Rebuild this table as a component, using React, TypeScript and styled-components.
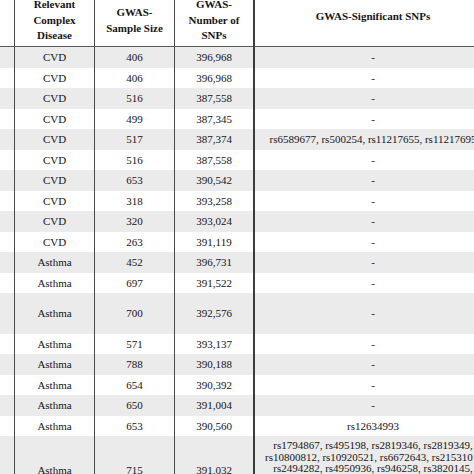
import React from "react";
import styled, { createGlobalStyle } from "styled-components";

interface GwasRow {
  disease: string;
  size: string;
  snps: string;
  significant: string[];
  height?: number;
}

const rows: GwasRow[] = [
  { disease: "CVD", size: "406", snps: "396,968", significant: ["-"] },
  { disease: "CVD", size: "406", snps: "396,968", significant: ["-"] },
  { disease: "CVD", size: "516", snps: "387,558", significant: ["-"] },
  { disease: "CVD", size: "499", snps: "387,345", significant: ["-"] },
  {
    disease: "CVD",
    size: "517",
    snps: "387,374",
    significant: ["rs6589677, rs500254, rs11217655, rs11217695"],
  },
  { disease: "CVD", size: "516", snps: "387,558", significant: ["-"] },
  { disease: "CVD", size: "653", snps: "390,542", significant: ["-"] },
  { disease: "CVD", size: "318", snps: "393,258", significant: ["-"] },
  { disease: "CVD", size: "320", snps: "393,024", significant: ["-"] },
  { disease: "CVD", size: "263", snps: "391,119", significant: ["-"] },
  { disease: "Asthma", size: "452", snps: "396,731", significant: ["-"] },
  { disease: "Asthma", size: "697", snps: "391,522", significant: ["-"] },
  { disease: "Asthma", size: "700", snps: "392,576", significant: ["-"], height: 40.5 },
  { disease: "Asthma", size: "571", snps: "393,137", significant: ["-"] },
  { disease: "Asthma", size: "788", snps: "390,188", significant: ["-"] },
  { disease: "Asthma", size: "654", snps: "390,392", significant: ["-"] },
  { disease: "Asthma", size: "650", snps: "391,004", significant: ["-"] },
  { disease: "Asthma", size: "653", snps: "390,560", significant: ["rs12634993"] },
  {
    disease: "Asthma",
    size: "715",
    snps: "391,032",
    significant: [
      "rs1794867, rs495198, rs2819346, rs2819349,",
      "rs10800812, rs10920521, rs6672643, rs2153101,",
      "rs2494282, rs4950936, rs946258, rs3820145,",
    ],
    height: 68,
  },
];

// first column is only a sliver: the table is cropped on the left
const colWidths = [14, 80, 80, 79, 238];

export default function App() {
  return (
    <>
      <GlobalStyle />
      <Page>
        <Table>
          <colgroup>
            {colWidths.map((w, i) => (
              <Col key={i} $w={w} />
            ))}
          </colgroup>
          <thead>
            <tr>
              <HeadCell $edge />
              <HeadCell>
                Relevant
                <br />
                Complex
                <br />
                Disease
              </HeadCell>
              <HeadCell>
                GWAS-
                <br />
                Sample Size
              </HeadCell>
              <HeadCell>
                GWAS-
                <br />
                Number of
                <br />
                SNPs
              </HeadCell>
              <HeadCell $wide>GWAS-Significant SNPs</HeadCell>
            </tr>
          </thead>
          <tbody>
            {rows.map((r, i) => {
              const multi = r.significant.length > 1;
              return (
                <Row key={i} $shaded={i % 2 === 0} $h={r.height ?? 20.5}>
                  <Cell $edge />
                  <Cell>{r.disease}</Cell>
                  <Cell>{r.size}</Cell>
                  <Cell>{r.snps}</Cell>
                  <SnpCell $wide $top={multi}>
                    {r.significant.map((line, j) => (
                      <React.Fragment key={j}>
                        {j > 0 && <br />}
                        {line}
                      </React.Fragment>
                    ))}
                  </SnpCell>
                </Row>
              );
            })}
          </tbody>
        </Table>
      </Page>
    </>
  );
}

const serif = `"Liberation Serif", "Times New Roman", Times, serif`;

const GlobalStyle = createGlobalStyle`
  html, body {
    margin: 0;
    padding: 0;
    background: #fff;
    overflow: hidden;
  }
`;

const Page = styled.div`
  width: 474px;
  height: 474px;
  overflow: hidden;
  font-family: ${serif};
  color: #151515;
`;

const Table = styled.table`
  margin-top: -5px;
  border-collapse: separate;
  border-spacing: 0;
  table-layout: fixed;
  width: 491px;
  font-family: ${serif};
  color: #151515;
`;

const Col = styled.col<{ $w: number }>`
  width: ${(p) => p.$w}px;
`;

const HeadCell = styled.th<{ $edge?: boolean; $wide?: boolean }>`
  box-sizing: border-box;
  height: 52px;
  padding: 0 0 ${(p) => (p.$wide ? "7px" : "0")} 0;
  font-family: ${serif};
  font-size: 11px;
  font-weight: bold;
  line-height: 15.5px;
  text-align: center;
  vertical-align: middle;
  border-bottom: 1px solid #5a5a5a;
  border-left: ${(p) => (p.$edge ? "none" : p.$wide ? "2px solid #3c3c3c" : "1px solid #4a4a4a")};
  background: #fff;
  white-space: nowrap;
`;

const Row = styled.tr<{ $shaded: boolean; $h: number }>`
  height: ${(p) => p.$h}px;
  background: ${(p) => (p.$shaded ? "#ebebeb" : "#fff")};
`;

const Cell = styled.td<{ $edge?: boolean; $wide?: boolean }>`
  padding: 0;
  font-family: ${serif};
  font-size: 11px;
  line-height: 12px;
  text-align: center;
  vertical-align: middle;
  white-space: nowrap;
  border-left: ${(p) => (p.$edge ? "none" : p.$wide ? "2px solid #3c3c3c" : "1px solid #4a4a4a")};
`;

const SnpCell = styled(Cell)<{ $top?: boolean }>`
  overflow: hidden;
  vertical-align: ${(p) => (p.$top ? "top" : "middle")};
  padding-top: ${(p) => (p.$top ? "4px" : "0")};
  line-height: ${(p) => (p.$top ? "11.5px" : "12px")};
`;
